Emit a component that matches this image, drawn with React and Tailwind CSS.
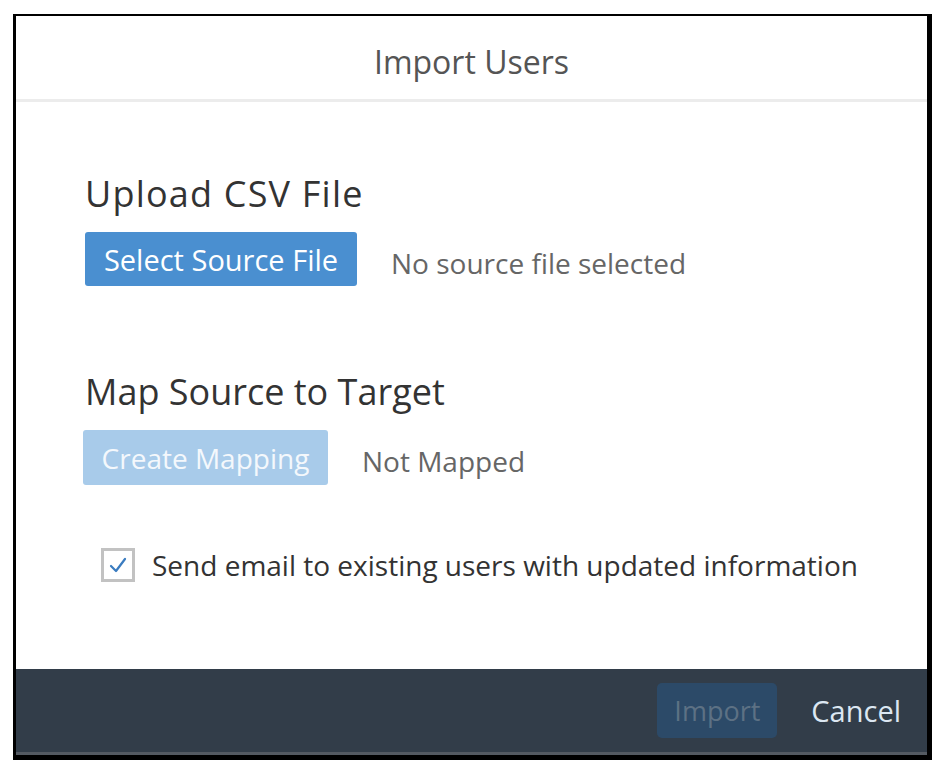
import React from 'react';

const App = () => {
  return (
    <div className="w-[948px] h-[782px] bg-white pl-[13px] pt-[14px]" style={{ fontFamily: '"Open Sans", "Liberation Sans", sans-serif' }}>
      <div className="w-[919px] h-[746px] border-black border-l-[3px] border-t-[2px] border-r-[5px] border-b-[5px] flex flex-col bg-white">
        <div className="h-[86px] flex items-center justify-center border-b-[3px] border-[#ececec]">
          <h1 className="text-[32px] text-[#555555] pt-[9px]">Import Users</h1>
        </div>

        <div className="flex-1 flex flex-col pl-[69px]">
          <h2 className="mt-[70px] text-[36px] leading-[44px] tracking-[1.2px] text-[#333333]">Upload CSV File</h2>
          <div className="mt-[16px] flex items-center gap-[34px]">
            <button className="w-[272px] h-[54px] rounded-[3px] bg-[#4a8fd0] text-white text-[29px] leading-none">
              Select Source File
            </button>
            <span className="pt-[7px] text-[28px] text-[#666666]">No source file selected</span>
          </div>

          <h2 className="mt-[84px] text-[36px] leading-[44px] text-[#333333]">Map Source to Target</h2>
          <div className="mt-[16px] flex items-center gap-[34px] -ml-[2px]">
            <button className="w-[245px] h-[55px] rounded-[3px] bg-[#a8cbea] text-[#f4f8fc] text-[28px] leading-none">
              Create Mapping
            </button>
            <span className="pt-[7px] text-[28px] text-[#666666]">Not Mapped</span>
          </div>

          <label className="mt-[59px] ml-[16px] flex items-center gap-[17px]">
            <span className="w-[34px] h-[34px] border-[3px] border-[#c2c2c2] bg-white flex items-center justify-center">
              <svg width="22" height="22" viewBox="0 0 22 22" fill="none">
                <path d="M4 12 L9 17 L18 5" stroke="#3a7cc0" strokeWidth="2.2" strokeLinecap="round" strokeLinejoin="round" />
              </svg>
            </span>
            <span className="text-[28px] text-[#333333]">Send email to existing users with updated information</span>
          </label>
        </div>

        <div className="h-[86px] bg-[#323d49] border-b-[3px] border-[#545a62] flex items-center justify-end gap-[34px] pr-[26px]">
          <button className="w-[120px] h-[55px] rounded-[5px] bg-[#2c4a68] text-[#5d7184] text-[27px] leading-none">Import</button>
          <span className="text-[29px] text-[#dce7f2]">Cancel</span>
        </div>
      </div>
    </div>
  );
};

export default App;
